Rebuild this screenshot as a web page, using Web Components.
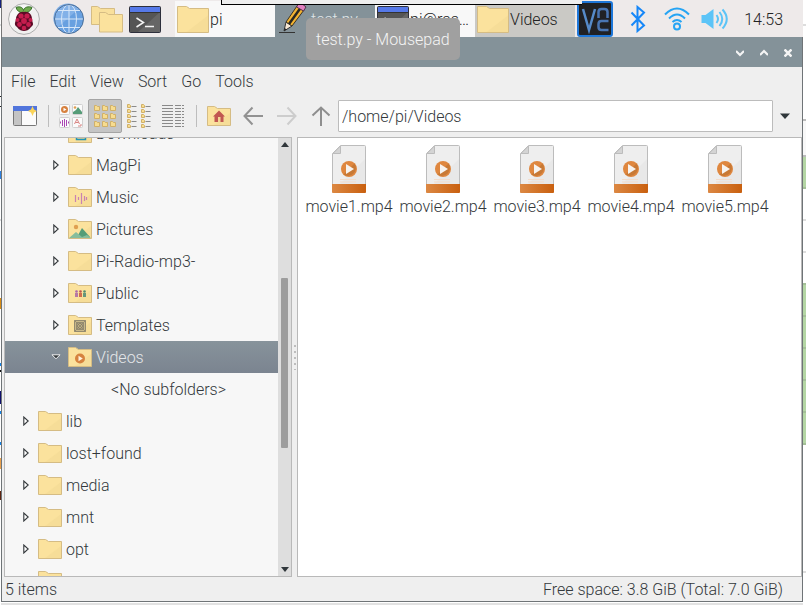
<!DOCTYPE html>
<html lang="en">
<head>
<meta charset="utf-8">
<title>Videos</title>
<style>
html, body { height: 100%; }
body { margin: 0; overflow: hidden; font: 300 16px/20px Roboto, "Liberation Sans", sans-serif; color: #33383b; }
</style>
</head>
<body>
<pi-desktop>
  <task-bar></task-bar>
  <file-manager></file-manager>
</pi-desktop>
<script>
const folderShape = (w, h) => `<path d="M.5 .5h${Math.round(w*.28)}l3 2H${w-.5}V${h-.5}H.5z" fill="#fbe29d" stroke="#d5bc84"/><path d="M${w-1} ${h*.35}V${h-1}H${w*.3}z" fill="#f3da94" opacity=".6"/>`;
const emblem = s => ['0 0 24 20', folderShape(24, 20) + s];
const miniFolder = (x, y, w = 5, h = 5) => `<path d="M${x} ${y}h2l1 1h${w-3}v${h-1}h-${w}z" fill="#f7dc8f" stroke="#d0b069"/>`;
const grid = (xs, ys, f) => xs.map(x => ys.map(y => f(x, y)).join('')).join('');
const terminal = `<rect x=".5" y=".5" width="31" height="26" rx="1" fill="#555" stroke="#2d2f3c"/><path d="M31 6v20H9z" fill="#666"/><path d="M1 1h30v5H1z" fill="#5679e8"/><path d="M1 6.500h30" stroke="#333"/><path d="M7.500 12l7 4.500-7 4.500M16 20.500h9" fill="none" stroke="#f4f4f4" stroke-width="1.500"/>`;
const ICONS = {
  folder: emblem(''),
  bigfolder: ['0 0 32 27', folderShape(32, 27)],
  downloads: emblem('<path d="M8.500 8v8.500h9V8" fill="#ead18e" stroke="#2495b5" stroke-width="1.500"/>'),
  music: emblem('<path d="M7.500 8v7M10.500 10v3M13.500 6v11M16.500 9v5M18.500 10v3" stroke="#c982b2" stroke-width="1.200"/>'),
  pictures: emblem('<circle cx="8" cy="8" r="2.200" fill="#df9f50"/><path d="M9 18l5-9 8 9z" fill="#559d77"/><path d="M1 19l7-6 6 5 5-2 4 3z" fill="#86bd9c"/>'),
  public: emblem('<path d="M7 10h3v4H7z" fill="#b778a4"/><path d="M11 10h3v4h-3z" fill="#d16d4b"/><path d="M15 10h3v4h-3z" fill="#65967c"/><circle cx="8.500" cy="8.500" r="1.300" fill="#ac65aa"/><circle cx="12.500" cy="8.500" r="1.300" fill="#bd544e"/><circle cx="16.500" cy="8.500" r="1.300" fill="#528b6d"/>'),
  templates: emblem('<path d="M6.500 5.500h11v11h-11z" fill="#c9b98a"/><path d="M6.500 5.500h11v11h-11zM8.500 7.500h7v7h-7zM6.500 5.500l11 11M17.500 5.500l-11 11" fill="none" stroke="#948b70"/><circle cx="12" cy="11" r="2.500" fill="none" stroke="#857d66"/>'),
  videos: emblem('<circle cx="12" cy="11.500" r="5" fill="#d6833f"/><path d="M10.500 8.800v5.400l4.300-2.700z" fill="#fff3dc"/>'),
  home: emblem('<path d="M12 4.500l6 6h-1.500v5.500h-9v-5.500H6z" fill="#c15751"/><path d="M11 11h2.500v5H11z" fill="#f2d795"/>'),
  raspberry: ['0 0 32 32', `<circle cx="16" cy="16" r="15.400" fill="#f0f0ef" stroke="#adadad"/><path d="M4 25L26 6a15 15 0 0 0-20 0 15 15 0 0 0-2 19" fill="#fafafa" opacity=".8"/>
    <path d="M15.500 10C12 10 9 8 8 4.500c3-1.400 7-.6 7.500 3C16 3.900 21 3 24 4.500 23 8 19.500 10 15.500 10z" fill="#6faa4c" stroke="#3b6f2e"/>
    <path d="M16 9c5-1 8 3 8 7s3 5-1 8c-2 3-5 4-7 4s-5-1-7-4c-4-3-1-5-1-8s3-8 8-7z" fill="#5c0b26"/>
    <g fill="#c51d4e"><circle cx="13" cy="13" r="2.600"/><circle cx="19" cy="13" r="2.600"/><circle cx="9.500" cy="17" r="2"/><circle cx="22.500" cy="17" r="2"/><circle cx="16" cy="18" r="2.900"/><circle cx="11.500" cy="21.500" r="2.400"/><circle cx="20.500" cy="21.500" r="2.400"/><circle cx="16" cy="25" r="2.300"/></g>`],
  globe: ['0 0 32 32', `<circle cx="16" cy="16" r="14.500" fill="#68a0e0"/><path d="M4 25L26 5.500A14.500 14.500 0 0 0 4 25" fill="#82b1e8"/><g fill="none" stroke="#d6e6f8"><path d="M16 2v28M2 16h28M4.500 7.500h23M4.500 24.500h23"/><ellipse cx="16" cy="16" rx="7.500" ry="14.500"/></g><circle cx="16" cy="16" r="14.500" fill="none" stroke="#4a6e98"/>`],
  folders: ['0 0 32 27', `<path d="M.5 .5h6l3 2h14v16H.5z" fill="#f9e09c" stroke="#d5bc84"/><path d="M8.500 6.500h6l3 2h14v17.500h-23z" fill="#fbe29d" stroke="#d5bc84"/>`],
  terminal: ['0 0 32 27', terminal],
  pencil: ['0 0 28 30', `<path d="M0 28.500h16" stroke="#333"/><path d="M5 27l2-9 6 4z" fill="#f8e8d4" stroke="#333"/><path d="M5 27l.700-3 2 1.500z" fill="#222"/><path d="M7 18L18 2l7 4-12 16z" fill="#f3b331" stroke="#3a3325"/><path d="M10 20L21.500 4" stroke="#292722" stroke-width="2.500"/><path d="M17.500 3L19 .5h5l3 2.500-2.500 4z" fill="#e17fc0" stroke="#50334a"/>`],
  vnc: ['0 0 36 36', `<rect x="1" y="1" width="34" height="34" rx="2" fill="#202124" stroke="#1d76d8" stroke-width="2"/><path d="M6 8l6 21 6-21" fill="none" stroke="#568bc9" stroke-width="2.500"/><path d="M21.500 17V11q0-3 3-3h3q3 0 3 3v6M31.500 20h-7q-3 0-3 3v3q0 3 3 3h7" fill="none" stroke="#4975b2" stroke-width="2.500"/>`],
  bluetooth: ['0 0 16 28', `<path d="M1.500 7.500l12.500 13-6.500 5.500V2L14 7.500l-12.500 13" fill="none" stroke="#1687f8" stroke-width="2"/>`],
  wifi: ['0 0 26 24', `<g fill="none" stroke="#25a4f4" stroke-width="2"><path d="M1 7.500q12-12 24 0M5 11.500q8-8 16 0M8.500 15q4.500-4 9 0"/><circle cx="13" cy="19.500" r="3"/></g>`],
  volume: ['0 0 28 22', `<path d="M.5 7h4L12.500 1v20l-8-6h-4z" fill="#5cc4f7"/><path d="M15.500 7q3 4 0 8M18.500 4q5.500 7 0 14M21.500 1.500q8.500 9.500 0 19" fill="none" stroke="#5cc4f7" stroke-width="2"/>`],
  newwindow: ['0 0 24 20', `<rect x=".5" y=".5" width="23" height="19" rx="1" fill="#fbfbfb" stroke="#777"/><path d="M1 4h7v15H1z" fill="#c4c4c4"/><path d="M8.500 5v14" stroke="#888"/><path d="M0 0h24v5H0z" fill="#5175dc"/><path d="M19.500 0l1.500 3.500L24 5l-3 1.500-1.500 3.500L18 6.500 15 5l3-1.500z" fill="#fbd458"/>`],
  thumbs: ['0 0 24 24', `<g fill="#fbfbfb" stroke="#d0d0d0"><rect x=".5" y=".5" width="10" height="10" rx="1"/><rect x="13.500" y=".5" width="10" height="10" rx="1"/><rect x=".5" y="13.500" width="10" height="10" rx="1"/><rect x="13.500" y="13.500" width="10" height="10" rx="1"/></g><circle cx="5.500" cy="5.500" r="3.500" fill="#d6803e"/><path d="M4.500 3.700v3.600l3-1.800z" fill="#fff"/><circle cx="16" cy="3.500" r="1.300" fill="#df9f50"/><path d="M14 10v-2l3-2 2-3 4 5v2z" fill="#569c78"/><path d="M1.500 17.500v2M3.500 16v6M5.500 15v8M7.500 16v6M9.500 17.500v2" stroke="#aa45b4"/><path d="M15.500 20l2.500-5 2.500 5M16.500 18.500h3M19 22h3v-2" fill="none" stroke="#d98482"/>`],
  icons: ['0 0 24 24', grid([1.5, 9.5, 17.5], [1.5, 9.5, 17.5], (x, y) => miniFolder(x, y))],
  compact: ['0 0 26 26', grid([1.5, 15.5], [1.5, 6.5, 11.5, 16.5, 21.5], (x, y) => miniFolder(x, y, 3, 3) + `<path d="M${x+4} ${y+2}h5" stroke="#8b8b8b"/>`)],
  details: ['0 0 22 24', grid([0, 13, 20], [1.5, 4.5, 7.5, 10.5, 13.5, 16.5, 19.5, 22.5], (x, y) => `<path d="M${x} ${y}h${x ? (x > 15 ? 2 : 6) : 11}" stroke="#8a8a8a"/>`)],
  back: ['0 0 20 20', '<path d="M20 10H1.500M9.500 1.500L1.500 10l8 8.500" fill="none" stroke="#929292" stroke-width="2"/>'],
  forward: ['0 0 20 20', '<path d="M0 10h18.500M10.500 1.500l8 8.500-8 8.500" fill="none" stroke="#cdcdcd" stroke-width="2"/>'],
  up: ['0 0 20 20', '<path d="M10 20V1.500M1.500 9.500l8.500-8 8.500 8" fill="none" stroke="#8e8e8e" stroke-width="2"/>'],
  down: ['0 0 10 6', '<path d="M0 .5h10L5 6z" fill="#30373b"/>'],
  scrollup: ['0 0 8 5', '<path d="M0 5h8L4 0z" fill="#30373b"/>'],
  scrolldown: ['0 0 8 5', '<path d="M0 0h8L4 5z" fill="#30373b"/>'],
  closed: ['0 0 6 10', '<path d="M.8 1v8L5.200 5z" fill="#fff" stroke="#34393c" stroke-width="1.100"/>'],
  open: ['0 0 10 6', '<path d="M1 .8h8L5 4.800z" fill="#33393d" stroke="#f2f2f2"/>'],
  min: ['0 0 8 8', '<path d="M0 2l4 4 4-4" fill="none" stroke="#f4f4f4" stroke-width="2.200"/>'],
  max: ['0 0 8 8', '<path d="M0 6l4-4 4 4" fill="none" stroke="#f4f4f4" stroke-width="2.200"/>'],
  close: ['0 0 8 8', '<path d="M.5 .5l7 7M7.500 .5l-7 7" stroke="#f4f4f4" stroke-width="2.500"/>'],
  movie: ['0 0 34 48', `<path d="M8.500 .5H32.500a1 1 0 0 1 1 1V47H.5V8.500z" fill="#eee" stroke="#bcbcbc"/><path d="M33 14v26H7z" fill="#e8e8e8"/><path d="M8.500 1v7.500H1z" fill="#d4d4d4" stroke="#bcbcbc"/><linearGradient id="g"><stop stop-color="#dc8843"/><stop offset="1" stop-color="#c9600f"/></linearGradient><path d="M0 39h34v8a1 1 0 0 1-1 1H1a1 1 0 0 1-1-1z" fill="url(#g)"/><path d="M8 34.500h16M8 37h16" stroke="#f3dccb"/><circle cx="17" cy="24" r="8" fill="#df873f"/><path d="M11.500 29.600l11-11.200a8 8 0 0 1-11 11.200" fill="#c87935"/><path d="M14 19v10l8-5z" fill="#f7f3ef"/>`]
};

const define = (name, html, setup) => {
  const template = document.createElement('template');
  template.innerHTML = html;
  customElements.define(name, class extends HTMLElement {
    connectedCallback() {
      if (this.shadowRoot) return;
      this.attachShadow({ mode: 'open' }).append(template.content.cloneNode(true));
      if (setup) setup(this, this.shadowRoot);
    }
  });
};

define('pi-icon', `<style>:host{display:block;flex:none}svg{display:block}</style>`, (el, root) => {
  const [box, body] = ICONS[el.getAttribute('name')];
  const [, , w, h] = box.split(' ');
  root.innerHTML += `<svg width="${w}" height="${h}" viewBox="${box}" aria-hidden="true">${body}</svg>`;
});

define('pi-desktop', `<style>
  :host{display:flex;flex-direction:column;box-sizing:border-box;height:100vh;padding:0 3px 6px 1px;position:relative;
   background:
    linear-gradient(#16217c 0 8px,#fff 8px 24px,#ddd 24px 26px,#fff 26px 96px,#222 96px 97px,#fff 97px 106px,#222 106px 107px,#fff 107px 171px,#2d7fe0 171px 179px,#fff 179px 219px,#ddd 219px 221px,#fff 221px 298px,#d88c14 298px 309px,#fff 309px 363px,#1684e8 363px 366px,#fff 366px 370px,#111 370px 372px,#fff 372px 391px,#10106c 391px 404px,#fff 404px 411px,#1684e8 411px 414px,#fff 414px 442px,#1684e8 442px 445px,#fff 445px 458px,#e9a14e 458px 469px,#fff 469px 491px,#5d2410 491px 500px,#fff 500px) left/1px 100% no-repeat,
    linear-gradient(#fff 0 24px,#ddd 24px 26px,#fff 26px 119px,#bbb 119px 121px,#f8f8f8 121px 155px,#bbb 155px 157px,#b4d6a4 157px 187px,#a4bf98 187px 189px,#fff 189px 219px,#ddd 219px 221px,#fff 221px 251px,#ddd 251px 253px,#fff 253px 283px,#a4bf98 283px 285px,#b4d6a4 285px 315px,#a4bf98 315px 317px,#b4d6a4 317px 347px,#a4bf98 347px 349px,#b4d6a4 349px 379px,#a4bf98 379px 381px,#b4d6a4 381px 411px,#a4bf98 411px 413px,#b4d6a4 413px 443px,#a4bf98 443px 445px,#fff 445px 571px,#ddd 571px 573px,#fff 573px) right/3px 100% no-repeat,
    linear-gradient(#fff 0 1px,#e2e2e2 1px 3px,#fff 3px) bottom/100% 6px no-repeat,#fff}
  </style><slot></slot>`);

define('task-button', `<style>
  :host{display:block;flex:none;width:100px;min-width:0}
  button{all:unset;display:flex;align-items:center;box-sizing:border-box;width:100%;height:100%;padding-left:2px;gap:1px;background:#f8f8f8;color:#222;overflow:hidden;white-space:nowrap}
  span{padding-top:2px}
  :host([front]) button{background:#cac9c5}
  :host([active]) button{background:#849299;color:#dfe4e6;padding-left:4px;gap:4px}
  </style><button><span><slot></slot></span></button>`, (el, root) => {
  root.querySelector('button').insertAdjacentHTML('afterbegin', `<pi-icon name="${el.getAttribute('icon')}"></pi-icon>`);
});

define('task-bar', `<style>
  :host{display:flex;flex:none;height:36px;padding-top:1px;background:#eeeaea;border-left:1px solid #777;position:relative;color:#222}
  .launch,.tray{display:flex;align-items:center}
  .launch{padding-left:6px;gap:6px;width:167px}
  button{all:unset;display:flex;flex:none}
  .launch button:nth-child(2){margin-left:7px}
  .tasks{display:flex;flex:none}
  .tray{margin-left:auto;padding-right:20px}
  .tray button:nth-child(2){margin-left:17px}
  .tray button:nth-child(3){margin-left:18px}
  .tray button:nth-child(4){margin-left:11px}
  time{margin-left:15px;padding-top:2px}
  .edge{position:absolute;left:219px;top:0;width:361px;height:5px;box-sizing:border-box;background:#eee;border-bottom:1px solid #000;border-left:1px solid #000}
  .tip{position:absolute;left:304px;top:18px;padding:12px 10px 10px;border-radius:5px;background:#a0a0a0;color:#f4f4f4;white-space:nowrap;z-index:2}
  </style>
  <div class="launch"><button aria-label="Menu"><pi-icon name="raspberry"></pi-icon></button><button aria-label="Web browser"><pi-icon name="globe"></pi-icon></button><button aria-label="Files"><pi-icon name="folders"></pi-icon></button><button aria-label="Terminal"><pi-icon name="terminal"></pi-icon></button></div>
  <div class="tasks"><task-button icon="bigfolder">pi</task-button><task-button icon="pencil" active>test.py</task-button><task-button icon="terminal">pi@ras…</task-button><task-button icon="bigfolder" front>Videos</task-button></div>
  <div class="tray"><button aria-label="VNC"><pi-icon name="vnc"></pi-icon></button><button aria-label="Bluetooth"><pi-icon name="bluetooth"></pi-icon></button><button aria-label="Wi-Fi"><pi-icon name="wifi"></pi-icon></button><button aria-label="Volume"><pi-icon name="volume"></pi-icon></button><time>14:53</time></div>
  <div class="edge"></div><div class="tip" role="tooltip">test.py - Mousepad</div>`);

define('tool-button', `<style>
  :host{display:block;flex:none;width:34px;height:34px}
  button{all:unset;display:flex;align-items:center;justify-content:center;box-sizing:border-box;width:100%;height:100%}
  :host([pressed]) button{background:#c5c5c5;border:1px solid #a4a4a4;border-radius:2px}
  :host([narrow]){width:24px}
  </style><button></button>`, (el, root) => {
  const b = root.querySelector('button');
  b.setAttribute('aria-label', el.getAttribute('label'));
  b.innerHTML = `<pi-icon name="${el.getAttribute('icon')}"></pi-icon>`;
});

define('tree-row', `<style>
  :host{display:flex;align-items:center;height:32px;flex:none;padding-left:16px;gap:4px;white-space:nowrap}
  :host([level="2"]){padding-left:46px}
  :host([note]){padding-left:106px}
  :host([selected]){background:linear-gradient(#87939b,#7b8490);color:#e4e7e9}
  button{all:unset;display:flex;width:9px;margin-right:4px;justify-content:center;flex:none}
  span{padding-top:2px}
  </style><span><slot></slot></span>`, (el, root) => {
  if (el.hasAttribute('note')) return;
  const open = el.hasAttribute('selected');
  root.querySelector('span').insertAdjacentHTML('beforebegin', `<button aria-label="${open ? 'Collapse' : 'Expand'}"><pi-icon name="${open ? 'open' : 'closed'}"></pi-icon></button><pi-icon name="${el.getAttribute('icon') || 'folder'}"></pi-icon>`);
});

define('folder-tree', `<style>
  :host{display:flex;box-sizing:border-box;width:288px;flex:none;border:1px solid #b9b9b9;background:#f7f7f7;min-height:0}
  .list{flex:1;display:flex;flex-direction:column;overflow:hidden;min-height:0}
  .bar{width:13px;flex:none;background:#dedede;display:flex;flex-direction:column;align-items:center;padding:4px 0}
  .track{flex:1;width:7px;display:grid;grid-template-rows:131fr 170fr 119fr}
  .thumb{grid-row:2;background:#9d9d9d;border-radius:1px}
  </style><div class="list"><slot></slot></div><div class="bar"><pi-icon name="scrollup"></pi-icon><div class="track"><div class="thumb"></div></div><pi-icon name="scrolldown"></pi-icon></div>`, (el, root) => {
  requestAnimationFrame(() => { root.querySelector('.list').scrollTop = 21; });
  root.querySelector('.list').scrollTop = 21;
});

define('file-item', `<style>
  :host{display:flex;flex-direction:column;align-items:center;gap:4px;width:94px}
  </style><pi-icon name="movie"></pi-icon><span><slot></slot></span>`);

define('file-manager', `<style>
  :host{display:flex;flex-direction:column;flex:1;min-height:0;border:1px solid #6f7477;border-top:0;background:#efefef}
  header{display:flex;flex:none;height:30px;background:#849299;align-items:center;justify-content:flex-end;gap:16px;padding-right:10px;padding-top:1px;box-sizing:border-box}
  header button,nav button{all:unset;display:flex}
  nav{display:flex;flex:none;gap:14px;padding:5px 9px 5px;height:20px}
  .tools{display:flex;flex:none;align-items:center;padding:2px 5px 4px 6px}
  .sep{width:12px;display:flex;justify-content:center}
  .sep::before{content:"";width:1px;height:22px;background:#bdbdbd}
  input{flex:1;min-width:0;height:32px;box-sizing:border-box;border:1px solid #bcbcbc;border-radius:1px;background:#fff;padding:0 3px;font:inherit;color:inherit;outline:0}
  .body{display:flex;flex:1;min-height:0;padding-left:2px}
  .grip{width:5px;flex:none;display:flex;align-items:center;justify-content:center}
  .grip::before{content:"";width:2px;height:25px;background:repeating-linear-gradient(#bdbdbd 0 2px,transparent 2px 6px)}
  .files{flex:1;min-width:0;box-sizing:border-box;border:1px solid #b9b9b9;background:#fff;display:flex;flex-wrap:wrap;align-content:flex-start;padding:7px 4px}
  footer{display:flex;flex:none;justify-content:space-between;padding:3px 19px 1px 3px}
  </style>
  <header><button aria-label="Minimize"><pi-icon name="min"></pi-icon></button><button aria-label="Maximize"><pi-icon name="max"></pi-icon></button><button aria-label="Close"><pi-icon name="close"></pi-icon></button></header>
  <nav><button>File</button><button>Edit</button><button>View</button><button>Sort</button><button>Go</button><button>Tools</button></nav>
  <div class="tools">
    <tool-button icon="newwindow" label="New window"></tool-button><span class="sep"></span>
    <tool-button icon="thumbs" label="Thumbnails"></tool-button><tool-button icon="icons" label="Icons" pressed></tool-button><tool-button icon="compact" label="Compact"></tool-button><tool-button icon="details" label="Detailed list"></tool-button><span class="sep"></span>
    <tool-button icon="home" label="Home"></tool-button><tool-button icon="back" label="Back"></tool-button><tool-button icon="forward" label="Forward"></tool-button><tool-button icon="up" label="Up"></tool-button>
    <input aria-label="Location" value="/home/pi/Videos"><tool-button icon="down" label="Location history" narrow></tool-button>
  </div>
  <div class="body">
    <folder-tree>
      <tree-row level="2" icon="downloads">Downloads</tree-row><tree-row level="2">MagPi</tree-row><tree-row level="2" icon="music">Music</tree-row><tree-row level="2" icon="pictures">Pictures</tree-row><tree-row level="2">Pi-Radio-mp3-</tree-row><tree-row level="2" icon="public">Public</tree-row><tree-row level="2" icon="templates">Templates</tree-row><tree-row level="2" icon="videos" selected>Videos</tree-row><tree-row note>&lt;No subfolders&gt;</tree-row>
      <tree-row>lib</tree-row><tree-row>lost+found</tree-row><tree-row>media</tree-row><tree-row>mnt</tree-row><tree-row>opt</tree-row><tree-row></tree-row>
    </folder-tree>
    <div class="grip"></div>
    <div class="files"><file-item>movie1.mp4</file-item><file-item>movie2.mp4</file-item><file-item>movie3.mp4</file-item><file-item>movie4.mp4</file-item><file-item>movie5.mp4</file-item></div>
  </div>
  <footer><span>5 items</span><span>Free space: 3.8 GiB (Total: 7.0 GiB)</span></footer>`);
</script>
</body>
</html>
